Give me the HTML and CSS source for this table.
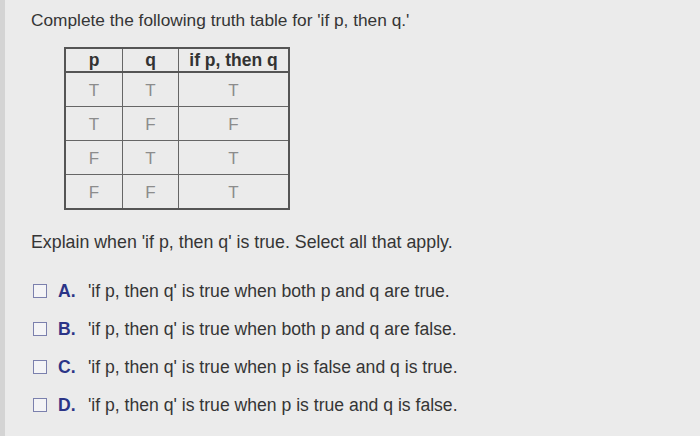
FILE: index.html
```html
<!DOCTYPE html>
<html>
<head>
<meta charset="utf-8">
<link rel="stylesheet" href="styles.css">
</head>
<body>
<div class="page">
  <p class="prompt">Complete the following truth table for 'if p, then q.'</p>
  <table class="truth">
    <tr class="head"><th class="c1">p</th><th class="c2">q</th><th class="c3">if p, then q</th></tr>
    <tr><td>T</td><td>T</td><td>T</td></tr>
    <tr><td>T</td><td>F</td><td>F</td></tr>
    <tr><td>F</td><td>T</td><td>T</td></tr>
    <tr><td>F</td><td>F</td><td>T</td></tr>
  </table>
  <p class="explain">Explain when 'if p, then q' is true. Select all that apply.</p>
  <ul class="options">
    <li><span class="box"></span><span class="letter">A.</span><span class="text">'if p, then q' is true when both p and q are true.</span></li>
    <li><span class="box"></span><span class="letter">B.</span><span class="text">'if p, then q' is true when both p and q are false.</span></li>
    <li><span class="box"></span><span class="letter">C.</span><span class="text">'if p, then q' is true when p is false and q is true.</span></li>
    <li><span class="box"></span><span class="letter">D.</span><span class="text">'if p, then q' is true when p is true and q is false.</span></li>
  </ul>
</div>
</body>
</html>
```
FILE: styles.css
```css
html, body {
  margin: 0;
  padding: 0;
}
body {
  background: #ebebeb;
  font-family: "Liberation Sans", Arial, sans-serif;
  color: #353535;
  width: 700px;
  height: 436px;
  overflow: hidden;
  border-left: 5px solid #d4d4d4;
  box-sizing: border-box;
}
.page {
  padding: 10px 0 0 26px;
}
.prompt {
  margin: 0;
  font-size: 17.3px;
  line-height: 20px;
}
.truth {
  margin: 17px 0 0 33px;
  border-collapse: collapse;
  border: 2px solid #555;
}
.truth th, .truth td {
  border: 1px solid #666;
  text-align: center;
  padding: 0;
}
.truth th {
  height: 22px;
  font-size: 17.5px;
  font-weight: bold;
  color: #333;
  border-bottom: 2px solid #555;
  line-height: 20px;
}
.truth td {
  height: 31px;
  font-size: 17px;
  color: #8c8c8c;
  padding-top: 2px;
}
.c1 { width: 56px; }
.c2 { width: 55px; }
.c3 { width: 109px; }
.explain {
  margin: 22px 0 0 0;
  font-size: 17.8px;
  line-height: 20px;
}
.options {
  list-style: none;
  margin: 29px 0 0 2px;
  padding: 0;
  display: flex;
  flex-direction: column;
  gap: 18px;
}
.options li {
  display: flex;
  align-items: center;
  font-size: 17.6px;
  line-height: 20px;
}
.box {
  width: 12px;
  height: 12px;
  border: 1px solid #7b80ad;
  background: #f4f4f6;
  margin-right: 11px;
}
.letter {
  font-weight: bold;
  color: #2b3487;
  width: 30px;
}
```
